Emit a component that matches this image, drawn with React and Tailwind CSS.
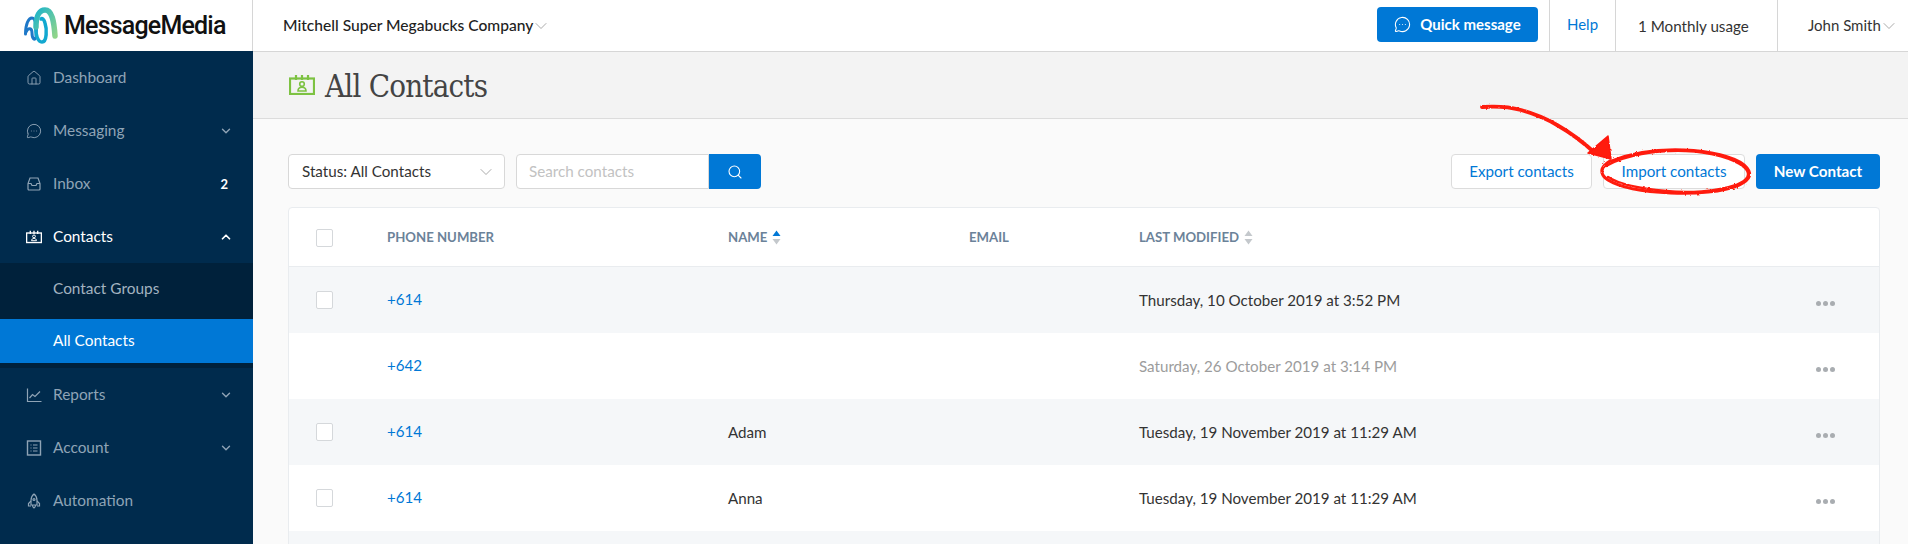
import { ChevronDown, ChevronUp, Home, MessageCircleMore, Search } from 'lucide-react'

const LATO = { fontFamily: 'Lato, sans-serif' }

function Logo() {
  return (
    <svg width="36" height="38" viewBox="0 0 36 38" fill="none" strokeLinecap="round" className="shrink-0">
      <defs>
        <linearGradient id="mm-arc" x1="0" y1="0" x2="1" y2="1">
          <stop offset="0" stopColor="#1fb5c9" />
          <stop offset="1" stopColor="#8fd48a" />
        </linearGradient>
      </defs>
      <path d="M2.500 27C2.500 17 5.500 11 9 11c4 0 5 11 4 19-1 4-4 2-4-4 0-5-3.500-6-6-1" stroke="#1e78c8" strokeWidth="3" />
      <path d="M13 18c-1 10 2 17 6 17 5 0 5-13 3-19-1-4-3-5-4-4" stroke="#12a8d0" strokeWidth="3.500" />
      <path d="M13 20C13 8 17 3 22 3 29 3 31 14 32 29" stroke="url(#mm-arc)" strokeWidth="5.500" />
    </svg>
  )
}

function ContactsIcon({ className }) {
  return (
    <svg viewBox="0 0 26 20" fill="none" stroke="currentColor" strokeWidth="2.200" className={className}>
      <rect x="1" y="3.500" width="24" height="15.500" />
      <path d="M7 0v5M13 0v5M19 0v5" />
      <circle cx="13" cy="9" r="2.300" strokeWidth="1.600" />
      <path d="M9 16c0-5 8-5 8 0z" strokeWidth="1.600" />
    </svg>
  )
}

function InboxIcon({ className }) {
  return (
    <svg viewBox="0 0 16 16" fill="none" stroke="currentColor" strokeWidth="1.200" className={className}>
      <path d="M4 2h8l2 5.500V13a1 1 0 0 1-1 1H3a1 1 0 0 1-1-1V7.500z" />
      <path d="M2 7.500h3l1 2h4l1-2h3" />
    </svg>
  )
}

function ReportsIcon({ className }) {
  return (
    <svg viewBox="0 0 16 16" fill="none" stroke="currentColor" strokeWidth="1.200" className={className}>
      <path d="M1.500 1.500v13h14" />
      <path d="M3.500 11l3-3.500 2.500 2 5-5" />
    </svg>
  )
}

function AccountIcon({ className }) {
  return (
    <svg viewBox="0 0 16 16" fill="none" stroke="currentColor" strokeWidth="1.400" className={className}>
      <rect x="1.500" y="1" width="13" height="14" />
      <path d="M4.500 5h1M4.500 8h1M4.500 11h1M7 5h4.500M7 8h4.500M7 11h4.500" strokeWidth="1.100" />
    </svg>
  )
}

function AutomationIcon({ className }) {
  return (
    <svg viewBox="0 0 16 16" fill="none" stroke="currentColor" strokeWidth="1.200" className={className}>
      <path d="M8 1c2 1.500 3 4 3 6.500V12H5V7.500C5 5 6 2.500 8 1z" />
      <path d="M5 8l-2.500 2.500V13H5M11 8l2.500 2.500V13H11" />
      <path d="M6.500 12c0 1.500.5 2.500 1.500 3 1-.5 1.500-1.500 1.500-3" />
      <circle cx="8" cy="6.500" r="1" />
    </svg>
  )
}

function NavItem({ icon: Icon, label, badge, chevron, active }) {
  return (
    <div className={`flex items-center h-[53px] pl-[26px] pr-[20px] text-[15.400px] ${active ? 'text-white' : 'text-[#8fa4b6]'}`}>
      <Icon className="w-4 h-4 mr-[11px] shrink-0" strokeWidth={1.4} />
      <span className="flex-1">{label}</span>
      {badge && <span className="text-white text-[13px] font-bold mr-[5px] pt-[2px]">{badge}</span>}
      {chevron === 'down' && <ChevronDown className="w-3.5 h-3.5" strokeWidth={2.4} />}
      {chevron === 'up' && <ChevronUp className="w-3.5 h-3.5 text-white" strokeWidth={3} />}
    </div>
  )
}

function Sidebar() {
  return (
    <aside className="w-[253px] shrink-0 bg-[#002b4d] -mt-px flex flex-col">
      <NavItem icon={Home} label="Dashboard" />
      <NavItem icon={MessageCircleMore} label="Messaging" chevron="down" />
      <NavItem icon={InboxIcon} label="Inbox" badge="2" />
      <NavItem icon={ContactsIcon} label="Contacts" chevron="up" active />
      <div className="bg-[#00213b] pb-[5px]">
        <div className="h-[56px] pl-[53px] pb-[4px] flex items-center text-[15.400px] text-[#a3b3c0]">Contact Groups</div>
        <div className="h-[44px] pl-[53px] flex items-center text-[15.400px] text-white bg-[#0078d6]">All Contacts</div>
      </div>
      <NavItem icon={ReportsIcon} label="Reports" chevron="down" />
      <NavItem icon={AccountIcon} label="Account" chevron="down" />
      <NavItem icon={AutomationIcon} label="Automation" />
    </aside>
  )
}

function Header() {
  return (
    <header className="h-[52px] flex items-stretch bg-white border-b border-[#d6d6d6]">
      <div className="w-[253px] shrink-0 flex items-center pl-[23px] gap-[5px] border-r border-[#d6d6d6]">
        <Logo />
        <span className="text-[25px] font-medium text-[#111] tracking-[-0.8px]" style={{ fontFamily: 'Roboto, sans-serif' }}>MessageMedia</span>
      </div>
      <div className="flex-1 flex items-center pl-[30px] text-[15.600px] font-medium text-[#222]">
        Mitchell Super Megabucks Company
        <ChevronDown className="w-5 h-5 -ml-[2px] text-[#9a9a9a]" strokeWidth={1} />
      </div>
      <div className="flex items-center pr-[11px] pb-[3px]">
        <button className="w-[161px] h-[35px] rounded bg-[#0078d6] text-white text-[15px] font-bold flex items-center justify-center gap-[9px]">
          <MessageCircleMore className="w-[17px] h-[17px]" strokeWidth={1.5} />
          Quick message
        </button>
      </div>
      <div className="w-[66px] border-l border-[#d6d6d6] flex items-center justify-center pb-[3px] text-[15px] text-[#0078d6]">Help</div>
      <div className="w-[162px] border-l border-[#d6d6d6] flex items-center pl-[22px] pt-[2px] text-[15.200px] text-[#333]">1 Monthly usage</div>
      <div className="w-[131px] border-l border-[#d6d6d6] flex items-center pl-[30px] text-[15px] text-[#333]">
        John Smith
        <ChevronDown className="w-5 h-5 -ml-[2px] text-[#9a9a9a]" strokeWidth={1} />
      </div>
    </header>
  )
}

function SortCaret({ active }) {
  return (
    <svg width="9" height="15" viewBox="0 0 9 15" className="shrink-0 ml-[5px]">
      <path d="M4.500 0.500 8.500 6H.5z" fill={active ? '#0078d6' : '#c4c8cc'} />
      <path d="M4.500 14.500 8.500 9H.5z" fill="#c4c8cc" />
    </svg>
  )
}

const rows = [
  { phone: '+614', name: '', date: 'Thursday, 10 October 2019 at 3:52 PM', check: true },
  { phone: '+642', name: '', date: 'Saturday, 26 October 2019 at 3:14 PM', muted: true },
  { phone: '+614', name: 'Adam', date: 'Tuesday, 19 November 2019 at 11:29 AM', check: true },
  { phone: '+614', name: 'Anna', date: 'Tuesday, 19 November 2019 at 11:29 AM', check: true },
]

function Checkbox() {
  return <div className="w-[17px] h-[18px] bg-white border border-[#d5d8db] rounded-[2px]" />
}

function Table() {
  return (
    <div className="bg-white border border-[#e9ecef] rounded-t mt-[18px]">
      <div className="h-[59px] pt-[2px] flex items-center border-b border-[#e9ecef] text-[13.200px] font-bold text-[#6b8299] uppercase">
        <div className="w-[98px] pl-[27px] shrink-0"><Checkbox /></div>
        <div className="w-[341px] shrink-0">Phone number</div>
        <div className="w-[241px] shrink-0 flex items-center">Name<SortCaret active /></div>
        <div className="w-[170px] shrink-0">Email</div>
        <div className="flex items-center">Last modified<SortCaret /></div>
      </div>
      {rows.map((r, i) => (
        <div key={i} className={`h-[66px] flex items-center text-[15.150px] ${i % 2 === 0 ? 'bg-[#f5f7f9]' : 'bg-white'}`}>
          <div className="w-[98px] pl-[27px] shrink-0">{r.check && <Checkbox />}</div>
          <div className="w-[341px] shrink-0 pb-[2px] text-[#0078d6]">{r.phone}</div>
          <div className="w-[411px] shrink-0 text-[#333]">{r.name}</div>
          <div className={`flex-1 ${r.muted ? 'text-[#9c9c9c]' : 'text-[#333]'}`}>{r.date}</div>
          <div className="w-[63px] flex gap-[2px] mt-[6px]">
            <span className="w-[5px] h-[5px] rounded-full bg-[#a9adb1]" />
            <span className="w-[5px] h-[5px] rounded-full bg-[#a9adb1]" />
            <span className="w-[5px] h-[5px] rounded-full bg-[#a9adb1]" />
          </div>
        </div>
      ))}
      <div className="h-[40px] bg-[#f5f7f9]" />
    </div>
  )
}

function Toolbar() {
  return (
    <div className="flex items-center justify-between text-[15.200px]">
      <div className="flex items-center">
        <div className="w-[217px] h-[35px] bg-white border border-[#d8d8d8] rounded flex items-center justify-between pl-[13px] pr-[8px] text-[#333]">
          Status: All Contacts
          <ChevronDown className="w-5 h-5 text-[#9a9a9a]" strokeWidth={1} />
        </div>
        <div className="ml-[11px] w-[193px] h-[35px] bg-white border border-[#d8d8d8] rounded-l flex items-center pl-[12px] text-[#c2c2c2]">Search contacts</div>
        <button className="w-[52px] h-[35px] bg-[#0078d6] rounded-r flex items-center justify-center text-white">
          <Search className="w-4 h-4" strokeWidth={1.6} />
        </button>
      </div>
      <div className="flex items-center gap-[11px]">
        <button className="w-[141px] h-[35px] bg-white border border-[#dcdcdc] rounded text-[#0078d6]">Export contacts</button>
        <button className="w-[142px] h-[35px] bg-white border border-[#dcdcdc] rounded text-[#0078d6]">Import contacts</button>
        <button className="w-[124px] h-[35px] bg-[#0078d6] rounded text-white font-bold">New Contact</button>
      </div>
    </div>
  )
}

// hand drawn arrow and circle round the import button
function Scribble() {
  return (
    <svg className="absolute left-[1470px] top-[95px] pointer-events-none" width="300" height="120" viewBox="1470 95 300 120" fill="none">
      <defs>
        <filter id="rough" x="-5%" y="-5%" width="110%" height="110%">
          <feTurbulence type="fractalNoise" baseFrequency="0.35" numOctaves="2" seed="4" />
          <feDisplacementMap in="SourceGraphic" scale="2.500" />
        </filter>
      </defs>
      <g filter="url(#rough)" stroke="#ff1a0d" strokeLinecap="round" strokeLinejoin="round">
        <path d="M1482 107c14-1 28 0 39 3 14 4 26 9 36 15 14 8 26 17 38 28" strokeWidth="3.800" />
        <path d="M1608 136 1588 153 1611 159z" fill="#ff1a0d" strokeWidth="1.500" />
        <path d="M1612 161c20-8 46-12 72-11 26 1 50 7 60 15 9 8 7 14-5 20-16 7-44 9-68 8-24-1-50-5-63-13-9-6-8-13 2-19" strokeWidth="3.200" />
        <path d="M1606 166c18-11 50-16 80-15 26 1 48 8 58 16 8 7 4 13-8 18-20 7-48 8-70 6-22-2-46-6-58-14" strokeWidth="2.400" />
      </g>
    </svg>
  )
}

export default function App() {
  return (
    <div className="relative w-[1908px] h-[544px] overflow-hidden bg-[#fafafa]" style={LATO}>
      <Header />
      <div className="flex h-[492px]">
        <Sidebar />
        <main className="flex-1 min-w-0">
          <div className="h-[67px] bg-[#f3f3f3] border-b border-[#dcdcdc] flex items-center pl-[36px] gap-[10px]">
            <ContactsIcon className="w-[26px] h-[20px] text-[#7dc242]" />
            <h1 className="text-[31px] pt-[2px] text-[#444] tracking-[-0.8px]" style={{ fontFamily: '"DejaVu Serif Condensed", "DejaVu Serif", serif' }}>All Contacts</h1>
          </div>
          <div className="pt-[35px] pl-[35px] pr-[28px]">
            <Toolbar />
            <Table />
          </div>
        </main>
      </div>
      <Scribble />
    </div>
  )
}
